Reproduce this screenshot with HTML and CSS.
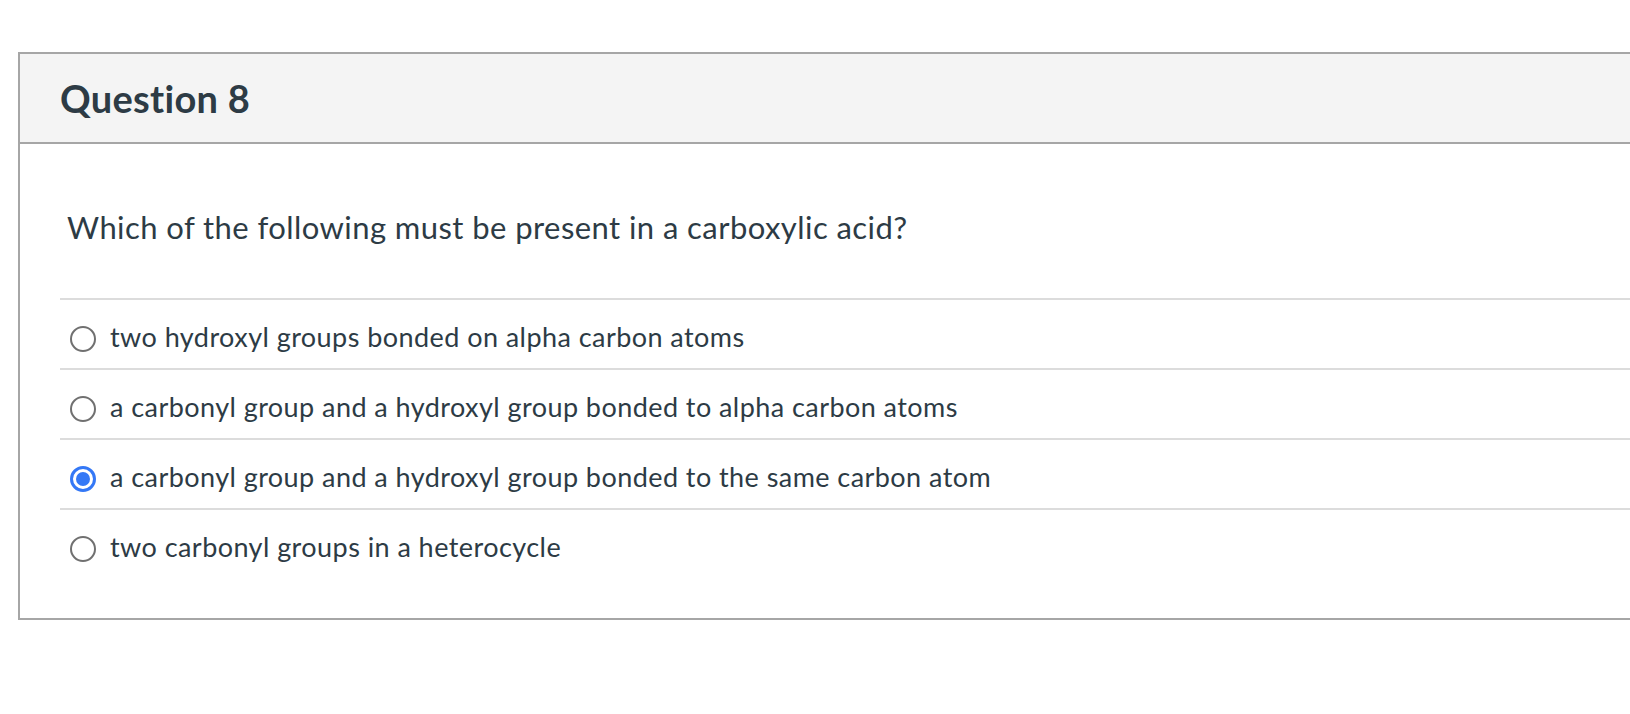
FILE: index.html
```html
<!DOCTYPE html>
<html>
<head>
    <meta charset="UTF-8">
    <title>Question 8</title>
    <link rel="stylesheet" href="styles.css">
</head>
<body>
    <div class="question-card">
        <div class="question-header">
            <h2>Question 8</h2>
        </div>
        <div class="question-body">
            <p class="question-text">Which of the following must be present in a carboxylic acid?</p>
            <div class="answers">
                <label class="answer">
                    <input type="radio" name="q8">
                    <span>two hydroxyl groups bonded on alpha carbon atoms</span>
                </label>
                <label class="answer">
                    <input type="radio" name="q8">
                    <span>a carbonyl group and a hydroxyl group bonded to alpha carbon atoms</span>
                </label>
                <label class="answer">
                    <input type="radio" name="q8" checked>
                    <span>a carbonyl group and a hydroxyl group bonded to the same carbon atom</span>
                </label>
                <label class="answer">
                    <input type="radio" name="q8">
                    <span>two carbonyl groups in a heterocycle</span>
                </label>
            </div>
        </div>
    </div>
</body>
</html>
```

FILE: styles.css
```css
* {
    margin: 0;
    padding: 0;
    box-sizing: border-box;
}

body {
    font-family: Lato, "Liberation Sans", sans-serif;
    color: #2d3b45;
    background-color: #fff;
    padding-top: 52px;
    padding-left: 18px;
}

.question-card {
    border: 2px solid #a6a6a6;
    border-right: none;
}

.question-header {
    height: 90px;
    display: flex;
    align-items: center;
    padding-left: 40px;
    background-color: #f4f4f4;
    border-bottom: 2px solid #a6a6a6;
}

.question-header h2 {
    font-size: 38px;
    font-weight: 700;
    letter-spacing: 0.3px;
}

.question-body {
    padding: 0 0 40px 40px;
}

.question-text {
    font-size: 31px;
    letter-spacing: 0.43px;
    padding: 64px 0 52px 7px;
}

.answer {
    display: flex;
    align-items: center;
    height: 70px;
    padding: 4px 0 0 10px;
    border-top: 2px solid #dcdcdc;
    font-size: 27px;
    letter-spacing: 0.44px;
}

.answer input {
    appearance: none;
    width: 26px;
    height: 26px;
    border: 2px solid #707070;
    border-radius: 50%;
    margin: 6px 14px 0 0;
    display: flex;
    align-items: center;
    justify-content: center;
    flex-shrink: 0;
}

.answer input:checked {
    border: 3px solid #3478f6;
}

.answer input:checked::after {
    content: "";
    width: 14px;
    height: 14px;
    border-radius: 50%;
    background-color: #3478f6;
}
```
